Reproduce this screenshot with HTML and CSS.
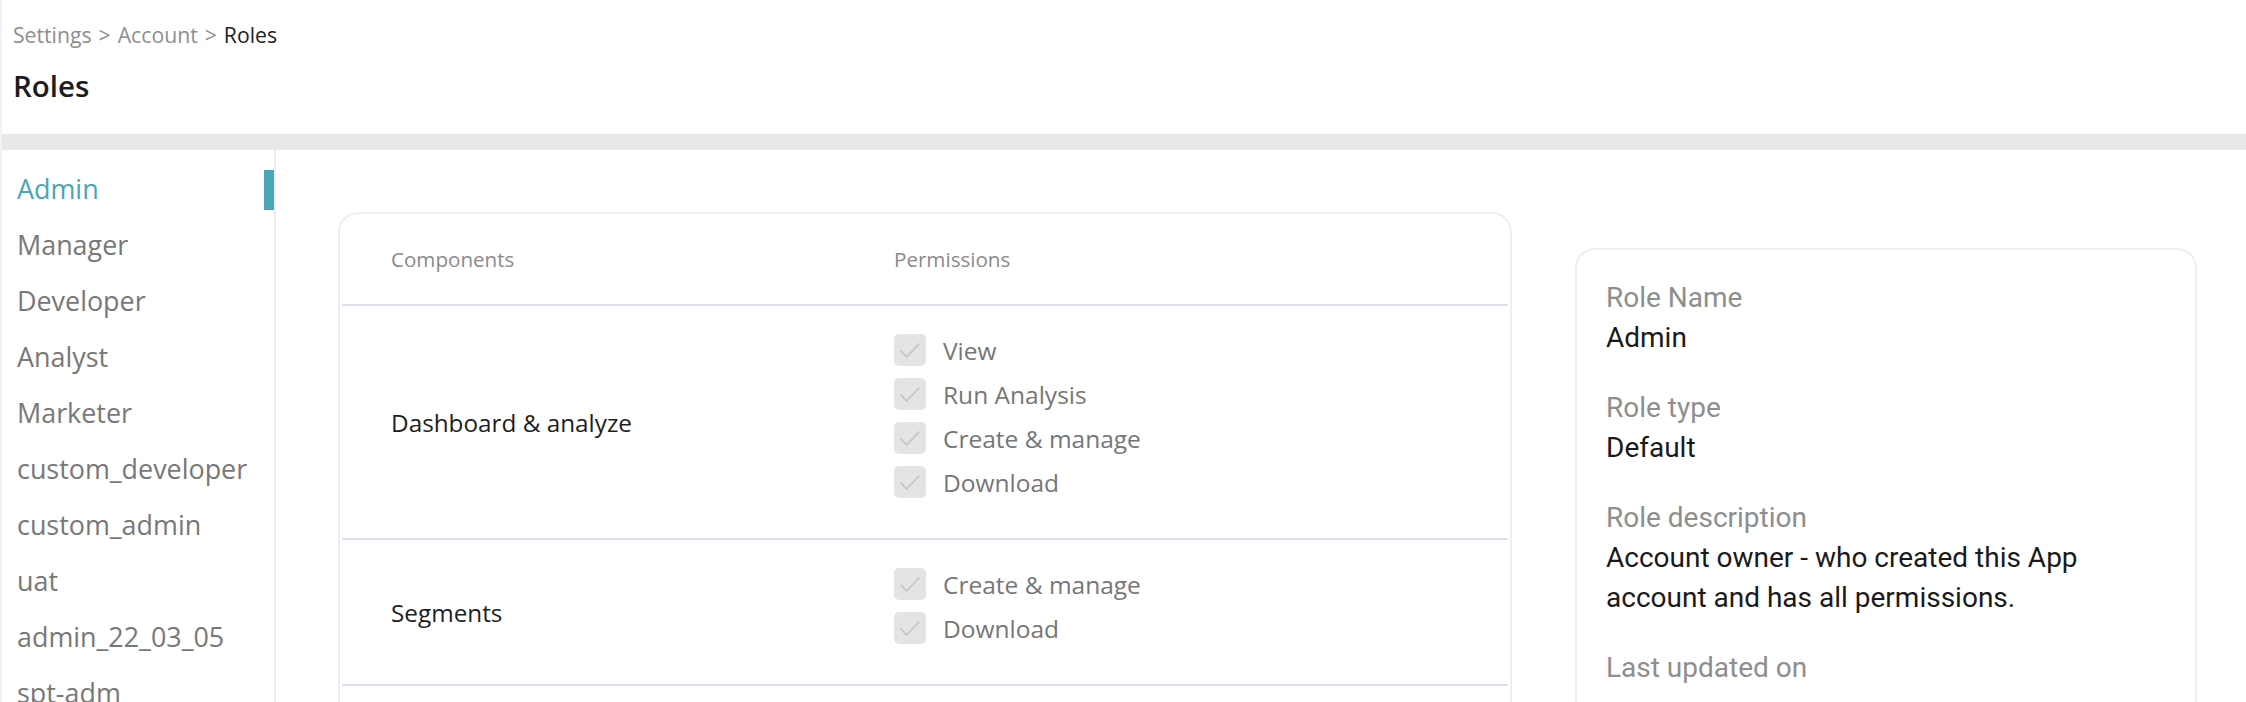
FILE: index.html
```html
<!DOCTYPE html>
<html lang="en">
<head>
<meta charset="utf-8">
<title>Roles</title>
<link rel="stylesheet" href="styles.css">
</head>
<body>
<header class="page-head">
  <nav class="crumbs"><span class="crumb">Settings</span><span class="sep">&gt;</span><span class="crumb">Account</span><span class="sep">&gt;</span><span class="crumb current">Roles</span></nav>
  <h1 class="title">Roles</h1>
</header>
<div class="band"></div>
<div class="layout">
  <aside class="sidebar">
    <ul class="role-list">
      <li class="role active">Admin</li>
      <li class="role">Manager</li>
      <li class="role">Developer</li>
      <li class="role">Analyst</li>
      <li class="role">Marketer</li>
      <li class="role">custom_developer</li>
      <li class="role">custom_admin</li>
      <li class="role">uat</li>
      <li class="role">admin_22_03_05</li>
      <li class="role">spt-adm</li>
    </ul>
  </aside>
  <main class="content">
    <section class="perm-card">
      <div class="perm-row perm-head">
        <div class="col-comp">Components</div>
        <div class="col-perm">Permissions</div>
      </div>
      <div class="perm-row">
        <div class="col-comp comp-name">Dashboard &amp; analyze</div>
        <ul class="col-perm perm-list">
          <li class="perm"><span class="box"><svg viewBox="0 0 32 32" width="32" height="32"><polyline points="7,17 12.5,23 25,10" /></svg></span>View</li>
          <li class="perm"><span class="box"><svg viewBox="0 0 32 32" width="32" height="32"><polyline points="7,17 12.5,23 25,10" /></svg></span>Run Analysis</li>
          <li class="perm"><span class="box"><svg viewBox="0 0 32 32" width="32" height="32"><polyline points="7,17 12.5,23 25,10" /></svg></span>Create &amp; manage</li>
          <li class="perm"><span class="box"><svg viewBox="0 0 32 32" width="32" height="32"><polyline points="7,17 12.5,23 25,10" /></svg></span>Download</li>
        </ul>
      </div>
      <div class="perm-row">
        <div class="col-comp comp-name">Segments</div>
        <ul class="col-perm perm-list">
          <li class="perm"><span class="box"><svg viewBox="0 0 32 32" width="32" height="32"><polyline points="7,17 12.5,23 25,10" /></svg></span>Create &amp; manage</li>
          <li class="perm"><span class="box"><svg viewBox="0 0 32 32" width="32" height="32"><polyline points="7,17 12.5,23 25,10" /></svg></span>Download</li>
        </ul>
      </div>
    </section>
    <section class="info-card">
      <div class="info-label">Role Name</div>
      <div class="info-value">Admin</div>
      <div class="info-label">Role type</div>
      <div class="info-value">Default</div>
      <div class="info-label">Role description</div>
      <div class="info-value">Account owner - who created this App account and has all permissions.</div>
      <div class="info-label">Last updated on</div>
    </section>
  </main>
</div>
</body>
</html>
```
FILE: styles.css
```css
html, body {
  margin: 0;
  padding: 0;
  height: 100%;
  overflow: hidden;
  background: #ffffff;
}

body {
  font-family: "Open Sans", "DejaVu Sans", sans-serif;
  color: #1c1c1c;
  border-left: 2px solid #f3f3f5;
  box-sizing: border-box;
}

ul {
  list-style: none;
  margin: 0;
  padding: 0;
}

/* header */
.page-head {
  height: 134px;
  box-sizing: border-box;
  padding: 20px 0 0 11px;
}

.crumbs {
  font-size: 21.2px;
  line-height: 29px;
  color: #8e8e8e;
  display: flex;
  gap: 7px;
}

.crumb.current {
  color: #222222;
}

.title {
  margin: 18px 0 0 0;
  font-size: 29.5px;
  line-height: 38px;
  font-weight: 600;
  color: #1c1c1c;
}

.band {
  height: 16px;
  background: #e8e8e8;
}

/* layout */
.layout {
  display: flex;
  align-items: stretch;
  height: calc(100% - 150px);
}

.sidebar {
  flex: 0 0 272px;
  border-right: 2px solid #eceef4;
  padding-top: 11px;
}

.role {
  position: relative;
  height: 56px;
  line-height: 56px;
  padding-left: 15px;
  font-size: 26.9px;
  color: #787878;
  white-space: nowrap;
}

.role.active {
  color: #4aa5b6;
}

.role.active::after {
  content: "";
  position: absolute;
  right: 0;
  top: 9px;
  width: 10px;
  height: 40px;
  background: #4aa5b6;
}

.content {
  flex: 1;
  display: flex;
  align-items: flex-start;
  gap: 63px;
  padding: 62px 49px 0 62px;
}

/* permissions card */
.perm-card {
  flex: 0 0 1174px;
  min-height: 700px;
  box-sizing: border-box;
  border: 2px solid #eceef5;
  border-bottom: none;
  border-radius: 20px 20px 0 0;
  padding: 0 2px;
}

.perm-row {
  display: grid;
  grid-template-columns: 503px 1fr;
  align-items: center;
  padding-left: 49px;
  border-bottom: 2px solid #dde0ea;
}

.perm-head {
  height: 92px;
  box-sizing: border-box;
  font-size: 20.6px;
  color: #8a8a8a;
}

.comp-name {
  font-size: 24.3px;
  color: #1e1e1e;
}

.perm-list {
  padding: 22px 0 34px 0;
}

.perm {
  display: flex;
  align-items: center;
  gap: 17px;
  height: 44px;
  font-size: 24.5px;
  color: #767676;
}

.box {
  width: 32px;
  height: 32px;
  border-radius: 5px;
  background: #e4e4e4;
  display: flex;
}

.box svg polyline {
  fill: none;
  stroke: #c3c3c3;
  stroke-width: 1.6;
  stroke-linecap: round;
  stroke-linejoin: round;
}

/* info card */
.info-card {
  flex: 1;
  min-height: 600px;
  margin-top: 36px;
  box-sizing: border-box;
  border: 2px solid #eceef5;
  border-radius: 20px;
  padding: 28px 31px 30px 29px;
  font-family: "Roboto", "Open Sans", sans-serif;
  font-size: 28px;
  line-height: 40px;
}

.info-label {
  color: #8e8e8e;
}

.info-value {
  color: #1a1a1a;
  margin-bottom: 30px;
}
```
